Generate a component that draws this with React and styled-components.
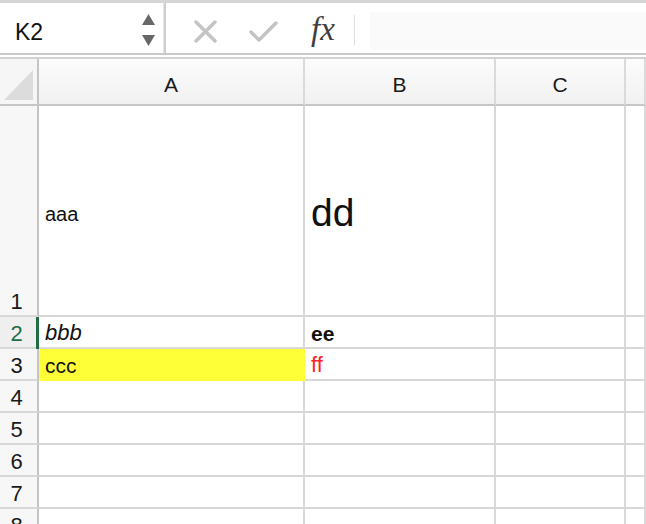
import React from 'react';
import styled, { createGlobalStyle } from 'styled-components';

const GlobalStyle = createGlobalStyle`
    html, body {
        margin: 0;
        padding: 0;
        background: #ffffff;
    }
    * {
        box-sizing: border-box;
    }
`;

const Window = styled.div`
    width: 646px;
    height: 524px;
    overflow: hidden;
    background: #ffffff;
    font-family: "Liberation Sans", Arial, sans-serif;
    color: #111;
`;

const TopStrip = styled.div`
    height: 3px;
    background: #d6d6d6;
`;

const FormulaBar = styled.div`
    display: flex;
    height: 52px;
    border-bottom: 2px solid #c9c9c9;
`;

const NameBox = styled.div`
    width: 164px;
    display: flex;
    align-items: center;
    justify-content: space-between;
    padding: 8px 8px 0 15px;
    border-right: 1px solid #e6e6e6;
    font-size: 23px;
`;

const Spinner = styled.div`
    display: flex;
    flex-direction: column;
    gap: 10px;
    margin-top: -4px;
`;

const BarSplit = styled.div`
    width: 2px;
    background: #cfcfcf;
`;

const Actions = styled.div`
    display: flex;
    align-items: center;
    padding: 6px 0 0 10px;
`;

const IconSlot = styled.div`
    width: 58px;
    height: 100%;
    display: flex;
    align-items: center;
    justify-content: center;
`;

const Fx = styled.span`
    font-family: "Liberation Serif", "Times New Roman", serif;
    font-style: italic;
    font-size: 33px;
    color: #3f3f3f;
    margin-left: 4px;
    margin-top: -4px;
`;

const Separator = styled.div`
    width: 1px;
    height: 30px;
    background: #dedede;
    align-self: center;
    margin: 4px 0 0 4px;
`;

const Input = styled.div`
    flex: 1;
    margin: 9px 0 3px 15px;
    background: #fafafa;
`;

const Sheet = styled.div`
    display: grid;
    grid-template-columns: 39px 266px 191px 130px 1fr;
    grid-template-rows: 47px 211px repeat(7, 32px);
    margin-top: 2px;
    border-top: 2px solid #d2d2d2;
`;

const Corner = styled.div`
    background: #f6f6f6;
    border-right: 2px solid #c4c4c4;
    border-bottom: 2px solid #c6c6c6;
    display: flex;
    align-items: flex-end;
    padding: 0 0 4px 4px;
`;

const ColHead = styled.div`
    background: linear-gradient(#fcfcfc, #f1f1f1);
    border-right: 2px solid #dadada;
    border-bottom: 2px solid #c6c6c6;
    display: flex;
    align-items: center;
    justify-content: center;
    font-size: 21px;
    color: #1a1a1a;
    padding-top: 6px;
`;

const RowHead = styled.div`
    position: relative;
    background: ${p => (p.$active ? '#efefef' : '#f7f7f7')};
    border-right: 2px solid ${p => (p.$active ? '#1f6e43' : '#c4c4c4')};
    border-bottom: 2px solid #d8d8d8;
    display: flex;
    align-items: flex-end;
    justify-content: center;
    padding: 0 4px 0 0;
    font-size: 22px;
    line-height: 26px;
    color: ${p => (p.$active ? '#1f6e43' : '#1a1a1a')};
`;

const ActiveMark = styled.span`
    position: absolute;
    right: -2px;
    top: 0;
    bottom: -2px;
    width: 3px;
    background: #1f6e43;
`;

const Cell = styled.div`
    display: flex;
    align-items: ${p => (p.$tall ? 'center' : 'flex-end')};
    padding: ${p => (p.$tall ? '6px 6px 0 6px' : '0 6px 1px 6px')};
    background: ${p => p.$fill || '#ffffff'};
    border-right: 2px solid ${p => p.$fill || '#d8d8d8'};
    border-bottom: 2px solid ${p => p.$fill || '#d8d8d8'};
    font-size: ${p => p.$size || 20}px;
    line-height: 1.2;
    font-weight: ${p => (p.$bold ? 700 : 400)};
    font-style: ${p => (p.$italic ? 'italic' : 'normal')};
    color: ${p => p.$color || '#111'};
    white-space: nowrap;
    overflow: hidden;
`;

const columns = ['A', 'B', 'C', ''];

const rows = [
    {
        n: 1,
        tall: true,
        cells: [{ text: 'aaa', size: 20 }, { text: 'dd', size: 39 }, {}, {}],
    },
    {
        n: 2,
        active: true,
        cells: [{ text: 'bbb', italic: true, size: 22 }, { text: 'ee', bold: true, size: 21 }, {}, {}],
    },
    {
        n: 3,
        cells: [{ text: 'ccc', fill: '#ffff38', size: 21 }, { text: 'ff', color: '#ff2424', size: 22 }, {}, {}],
    },
    { n: 4, cells: [{}, {}, {}, {}] },
    { n: 5, cells: [{}, {}, {}, {}] },
    { n: 6, cells: [{}, {}, {}, {}] },
    { n: 7, cells: [{}, {}, {}, {}] },
    { n: 8, cells: [{}, {}, {}, {}] },
];

const Triangle = ({ up }) => (
    <svg width="13" height="11" viewBox="0 0 13 11">
        <path d={up ? 'M6.5 0 L13 11 L0 11 Z' : 'M0 0 L13 0 L6.5 11 Z'} fill="#686868" />
    </svg>
);

const Cross = () => (
    <svg width="23" height="23" viewBox="0 0 23 23">
        <path d="M2 2 L21 21 M21 2 L2 21" stroke="#c4c4c4" strokeWidth="3.5" strokeLinecap="round" />
    </svg>
);

const Check = () => (
    <svg width="29" height="23" viewBox="0 0 29 23">
        <path d="M2 12 L10 20 L27 3" stroke="#c4c4c4" strokeWidth="3.5" fill="none" strokeLinecap="round" strokeLinejoin="round" />
    </svg>
);

const CornerMark = () => (
    <svg width="29" height="30" viewBox="0 0 29 30">
        <path d="M29 0 L29 30 L0 30 Z" fill="#dcdcdc" />
    </svg>
);

const App = () => (
    <Window>
        <GlobalStyle />
        <TopStrip />
        <FormulaBar>
            <NameBox>
                K2
                <Spinner>
                    <Triangle up />
                    <Triangle />
                </Spinner>
            </NameBox>
            <BarSplit />
            <Actions>
                <IconSlot><Cross /></IconSlot>
                <IconSlot><Check /></IconSlot>
                <IconSlot><Fx>fx</Fx></IconSlot>
            </Actions>
            <Separator />
            <Input />
        </FormulaBar>
        <Sheet>
            <Corner><CornerMark /></Corner>
            {columns.map((c, i) => (
                <ColHead key={i}>{c}</ColHead>
            ))}
            {rows.map(r => (
                <React.Fragment key={r.n}>
                    <RowHead $active={r.active}>
                        {r.n}
                        {r.active && <ActiveMark />}
                    </RowHead>
                    {r.cells.map((cell, i) => (
                        <Cell
                            key={i}
                            $tall={r.tall}
                            $size={cell.size}
                            $bold={cell.bold}
                            $italic={cell.italic}
                            $color={cell.color}
                            $fill={cell.fill}
                        >
                            {cell.text}
                        </Cell>
                    ))}
                </React.Fragment>
            ))}
        </Sheet>
    </Window>
);

export default App;
